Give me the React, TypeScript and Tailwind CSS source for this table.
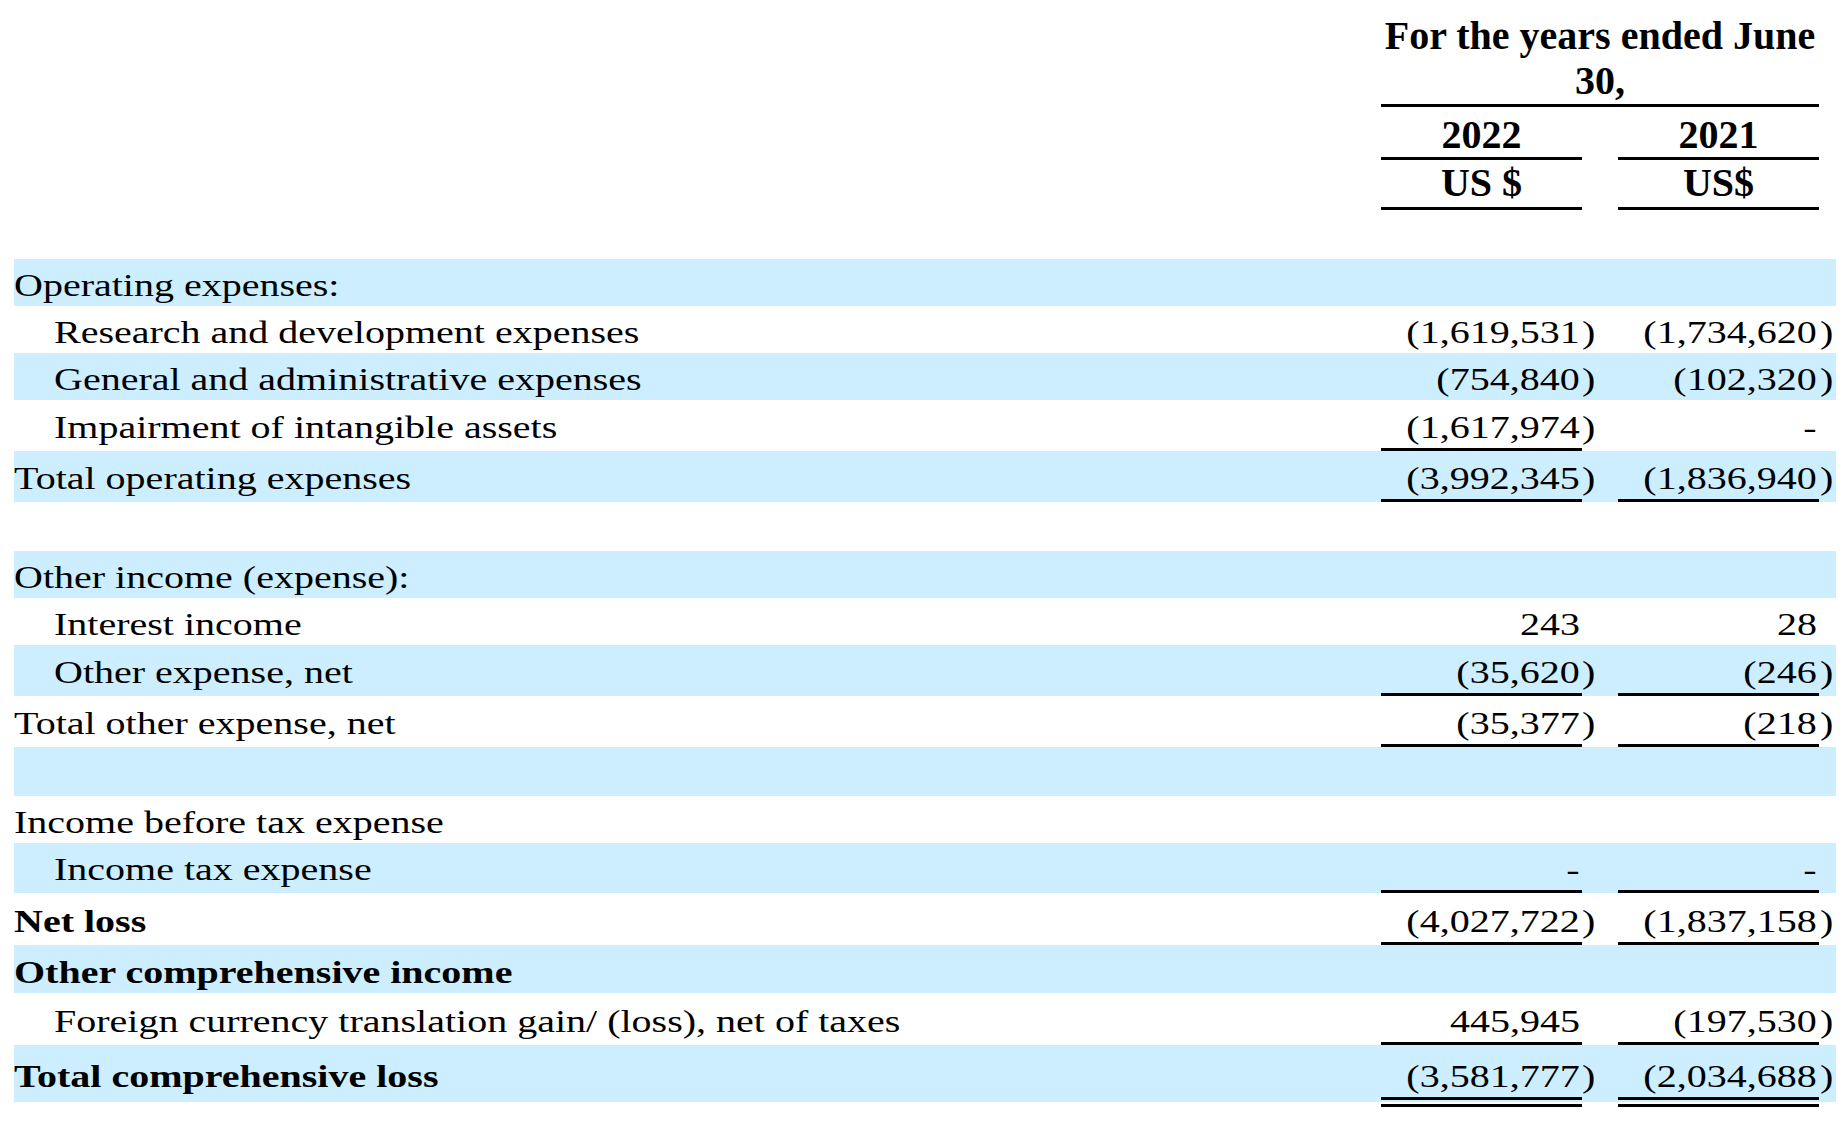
import React from "react";

type Row = {
  label: string;
  indent?: boolean;
  bold?: boolean;
  blue?: boolean;
  h: string;
  v1?: string;
  p1?: boolean;
  u1?: boolean;
  v2?: string;
  p2?: boolean;
  u2?: boolean;
};

const rows: Row[] = [
  { label: "Operating expenses:", blue: true, h: "h-[47px]" },
  { label: "Research and development expenses", indent: true, h: "h-[47px]", v1: "(1,619,531", p1: true, v2: "(1,734,620", p2: true },
  { label: "General and administrative expenses", indent: true, blue: true, h: "h-[47px]", v1: "(754,840", p1: true, v2: "(102,320", p2: true },
  { label: "Impairment of intangible assets", indent: true, h: "h-[51px]", v1: "(1,617,974", p1: true, u1: true, v2: "-" },
  { label: "Total operating expenses", blue: true, h: "h-[51px]", v1: "(3,992,345", p1: true, u1: true, v2: "(1,836,940", p2: true, u2: true },
  { label: "", h: "h-[49px]" },
  { label: "Other income (expense):", blue: true, h: "h-[47px]" },
  { label: "Interest income", indent: true, h: "h-[47px]", v1: "243", v2: "28" },
  { label: "Other expense, net", indent: true, blue: true, h: "h-[51px]", v1: "(35,620", p1: true, u1: true, v2: "(246", p2: true, u2: true },
  { label: "Total other expense, net", h: "h-[51px]", v1: "(35,377", p1: true, u1: true, v2: "(218", p2: true, u2: true },
  { label: "", blue: true, h: "h-[49px]" },
  { label: "Income before tax expense", h: "h-[47px]" },
  { label: "Income tax expense", indent: true, blue: true, h: "h-[50px]", v1: "-", u1: true, v2: "-", u2: true },
  { label: "Net loss", bold: true, h: "h-[52px]", v1: "(4,027,722", p1: true, u1: true, v2: "(1,837,158", p2: true, u2: true },
  { label: "Other comprehensive income", bold: true, blue: true, h: "h-[48px]" },
  { label: "Foreign currency translation gain/ (loss), net of taxes", indent: true, h: "h-[52px]", v1: "445,945", u1: true, v2: "(197,530", p2: true, u2: true },
  { label: "Total comprehensive loss", bold: true, blue: true, h: "h-[55px]", v1: "(3,581,777", p1: true, u1: true, v2: "(2,034,688", p2: true, u2: true },
];

function TableRow({ r }: { r: Row }) {
  const anyU = !!(r.u1 || r.u2);
  const clear = anyU ? "border-b-[3px] border-transparent" : "";
  const u1 = anyU ? (r.u1 ? "border-b-[3px] border-black" : "border-b-[3px] border-transparent") : "";
  const u2 = anyU ? (r.u2 ? "border-b-[3px] border-black" : "border-b-[3px] border-transparent") : "";
  return (
    <div className={`flex ${r.h} ${r.blue ? "bg-[#cceeff]" : "bg-white"}`}>
      <div className={`flex-1 flex items-end pb-[3px] ${r.indent ? "pl-[40px]" : "pl-0"} ${clear}`}>
        <span className={`inline-block origin-left scale-x-[1.25] whitespace-nowrap ${r.bold ? "font-bold" : "font-normal"}`}>
          {r.label}
        </span>
      </div>
      <div className={`w-[201px] flex items-end justify-end pb-[3px] pr-[2px] ${u1}`}>
        {r.v1 && <span className="inline-block origin-right scale-x-[1.25] whitespace-nowrap">{r.v1}</span>}
      </div>
      <div className={`w-[36px] flex items-end pb-[3px] ${clear}`}>
        {r.p1 && <span className="inline-block origin-left scale-x-[1.25]">)</span>}
      </div>
      <div className={`w-[201px] flex items-end justify-end pb-[3px] pr-[2px] ${u2}`}>
        {r.v2 && <span className="inline-block origin-right scale-x-[1.25] whitespace-nowrap">{r.v2}</span>}
      </div>
      <div className={`w-[17px] flex items-end pb-[3px] pl-[1px] ${clear}`}>
        {r.p2 && <span className="inline-block origin-left scale-x-[1.25]">)</span>}
      </div>
    </div>
  );
}

export default function App() {
  return (
    <div className="w-[1848px] h-[1125px] overflow-hidden bg-white text-black font-['Liberation_Serif','Times_New_Roman',serif]">
      <div className="flex ml-[14px] mr-[12px] h-[259px]">
        <div className="flex-1" />
        <div className="w-[438px] flex flex-col text-[40px] leading-[45px] font-bold">
          <div className="pt-[13px] pb-[1px] border-b-[3px] border-black text-center">For the years ended June 30,</div>
          <div className="flex">
            <div className="w-[201px] pt-[5px] border-b-[3px] border-black text-center">2022</div>
            <div className="w-[36px]" />
            <div className="w-[201px] pt-[5px] border-b-[3px] border-black text-center">2021</div>
          </div>
          <div className="flex">
            <div className="w-[201px] pb-[2px] border-b-[3px] border-black text-center">US $</div>
            <div className="w-[36px]" />
            <div className="w-[201px] pb-[2px] border-b-[3px] border-black text-center">US$</div>
          </div>
        </div>
        <div className="w-[17px]" />
      </div>
      <div className="ml-[14px] mr-[12px] text-[32px] leading-[35px]">
        {rows.map((r, i) => (
          <TableRow key={i} r={r} />
        ))}
        <div className="h-[2px] bg-[#cceeff]" />
        <div className="flex h-[5px]">
          <div className="flex-1" />
          <div className="w-[201px] border-b-[3px] border-black" />
          <div className="w-[36px]" />
          <div className="w-[201px] border-b-[3px] border-black" />
          <div className="w-[17px]" />
        </div>
      </div>
    </div>
  );
}
